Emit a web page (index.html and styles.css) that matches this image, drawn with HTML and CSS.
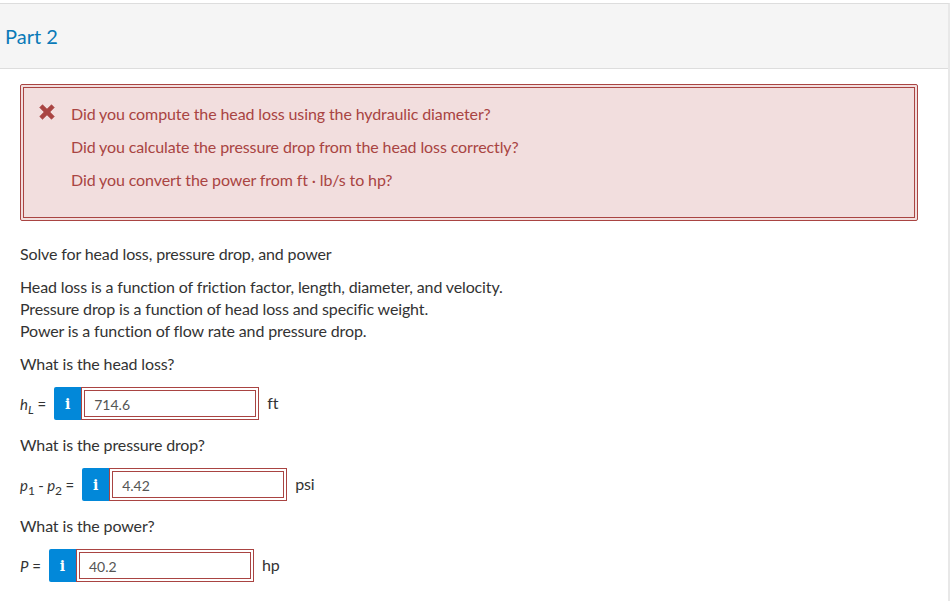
FILE: index.html
```html
<!doctype html>
<html>
  <head>
    <meta charset="utf-8" />
    <title>Part 2</title>
    <link rel="stylesheet" href="styles.css">
  </head>
  <body>
    <div class="part">
      <div class="part-header">Part 2</div>
      <div class="part-body">
        <div class="alert">
          <svg class="alert-icon" width="16" height="16" viewBox="0 0 16 16"><path d="M0.800 3.500 3.500 0.800 8 5.200 12.500 0.800 15.200 3.500 10.800 8 15.200 12.500 12.500 15.200 8 10.800 3.500 15.200 0.800 12.500 5.200 8Z" fill="#a94442" stroke="#a94442" stroke-width="0.800" stroke-linejoin="round"/></svg>
          <div class="alert-lines">
            <p>Did you compute the head loss using the hydraulic diameter?</p>
            <p>Did you calculate the pressure drop from the head loss correctly?</p>
            <p>Did you convert the power from ft &middot; lb/s to hp?</p>
          </div>
        </div>
        <p class="para">Solve for head loss, pressure drop, and power</p>
        <p class="para">Head loss is a function of friction factor, length, diameter, and velocity.<br>Pressure drop is a function of head loss and specific weight.<br>Power is a function of flow rate and pressure drop.</p>
        <p class="para">What is the head loss?</p>
        <div class="answer">
          <span class="label"><i>h<sub>L</sub></i> =</span>
          <span class="info">i</span>
          <span class="field">714.6</span>
          <span class="unit">ft</span>
        </div>
        <p class="para">What is the pressure drop?</p>
        <div class="answer">
          <span class="label label-tight"><i>p</i><sub>1</sub> - <i>p</i><sub>2</sub> =</span>
          <span class="info">i</span>
          <span class="field">4.42</span>
          <span class="unit">psi</span>
        </div>
        <p class="para">What is the power?</p>
        <div class="answer">
          <span class="label"><i>P</i> =</span>
          <span class="info">i</span>
          <span class="field">40.2</span>
          <span class="unit">hp</span>
        </div>
      </div>
    </div>
  </body>
</html>
```

FILE: styles.css
```css
* { box-sizing: border-box; }
body { margin: 0; background: #fff; color: #333; font-family: Lato, sans-serif; font-size: 16px; line-height: 22px; letter-spacing: -0.13px; overflow: hidden; }
p { margin: 0; }
.part { margin: 3px 1px 0 0; border-top: 1px solid #ddd; border-right: 2px solid #e8e8e8; height: 598px; }
.part-header { height: 65px; padding: 20px 5px 0; background: #f5f5f5; border-bottom: 1px solid #ddd; color: #0a7ab8; font-size: 20px; line-height: 24px; letter-spacing: 0; }
.part-body { padding: 15px 30px 0 20px; }
.alert { display: flex; width: 898px; height: 137px; padding: 15px; border: 4px double #a94442; border-radius: 2px; background: #f2dede; color: #a94442; letter-spacing: -0.11px; }
.alert-icon { margin: 1px 0 0 0; flex: none; }
.alert-lines { margin-left: 16px; }
.alert-lines p { height: 33px; line-height: 22px; }
.para { margin-top: 11px; }
.alert + .para { margin-top: 22px; }
.answer { display: flex; align-items: center; height: 33px; margin: 12px 0 14px; }
.answer + .para { margin-top: 0; }
.label { margin-right: 8px; font-size: 15px; line-height: 20px; letter-spacing: 0; }
.label-tight { word-spacing: -0.5px; }
.label sub { font-size: 12px; line-height: 0; }
.info { display: flex; align-items: center; justify-content: center; width: 27px; height: 33px; background: #0288d9; border-radius: 2px 0 0 2px; color: #fff; font-family: "DejaVu Serif", serif; font-weight: bold; font-size: 14px; letter-spacing: 0; }
.field { width: 178px; height: 33px; padding: 4px 9px 0; border: 4px double #a94442; color: #555; font-size: 14px; line-height: 20px; letter-spacing: 0; }
.unit { margin-left: 8px; padding-bottom: 2px; }
```
